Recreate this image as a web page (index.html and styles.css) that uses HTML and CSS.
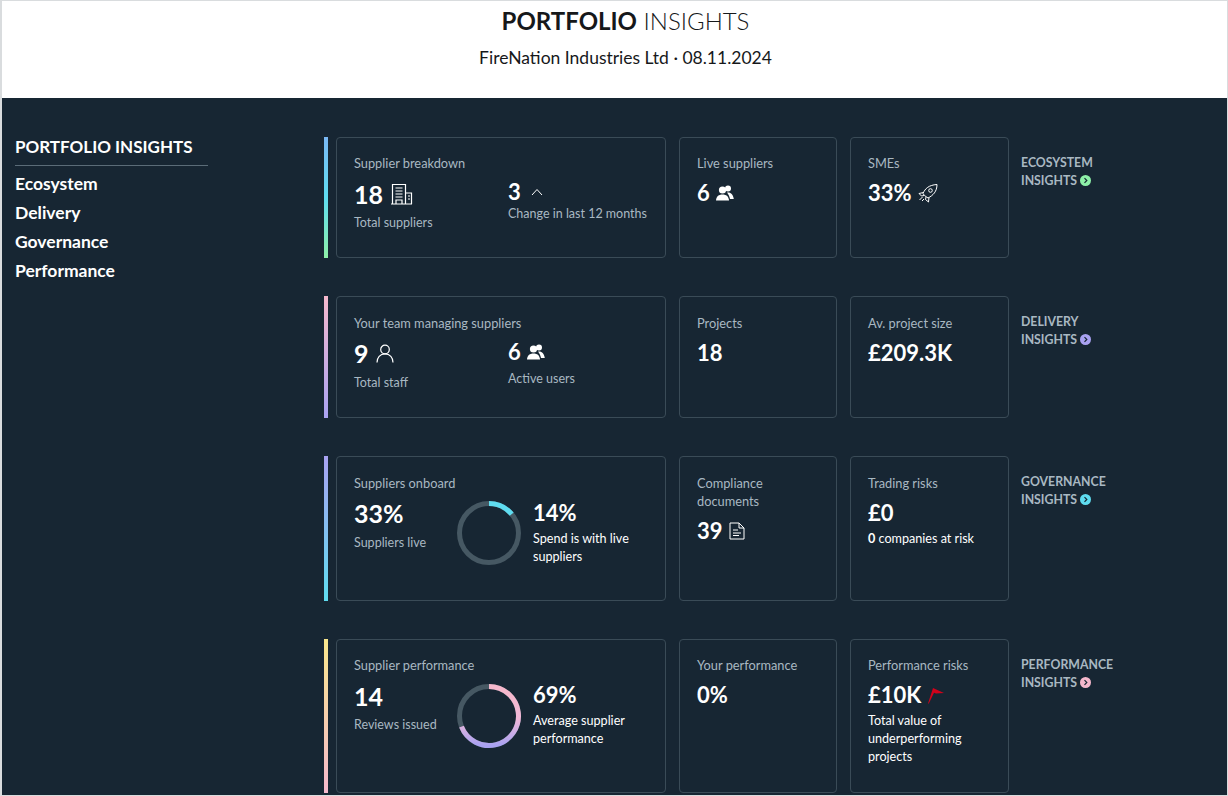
FILE: index.html
```html
<!DOCTYPE html>
<html lang="en">
<head>
    <meta charset="UTF-8">
    <meta name="viewport" content="width=device-width, initial-scale=1.0">
    <title>Portfolio Insights</title>
    <link rel="stylesheet" href="styles.css">
</head>
<body>
    <header class="top">
        <h1><strong>PORTFOLIO</strong> INSIGHTS</h1>
        <p>FireNation Industries Ltd · 08.11.2024</p>
    </header>

    <main class="main">
        <nav class="side">
            <h2>PORTFOLIO INSIGHTS</h2>
            <a href="#">Ecosystem</a>
            <a href="#">Delivery</a>
            <a href="#">Governance</a>
            <a href="#">Performance</a>
        </nav>

        <div class="rows">
            <!-- Ecosystem -->
            <section class="row row-eco">
                <div class="bar"></div>
                <div class="card card-wide">
                    <div class="label">Supplier breakdown</div>
                    <div class="split">
                        <div class="col-left">
                            <div class="big">18
                                <svg class="ico" width="24" height="22" viewBox="0 0 24 22" fill="none" stroke="#fff" stroke-width="1.2"><path d="M2.500 21V1.500h13V21M1 21h21M6 21v-4h6v4M5.500 5h7M5.500 8h7M5.500 11h7M5.500 14h7M15.500 10h6v11M18 13h2M18 16h2"/></svg>
                            </div>
                            <div class="sub">Total suppliers</div>
                        </div>
                        <div class="col-right">
                            <div class="mid">3
                                <svg class="ico ico-chev" width="12" height="8" viewBox="0 0 12 8" fill="none" stroke="#fff" stroke-width="1"><path d="M1 7l5-5.500L11 7"/></svg>
                            </div>
                            <div class="sub">Change in last 12 months</div>
                        </div>
                    </div>
                </div>
                <div class="card">
                    <div class="label">Live suppliers</div>
                    <div class="mid">6
                        <svg class="ico" width="18" height="16" viewBox="0 0 18 16" fill="#fff"><circle cx="6.500" cy="5" r="3.600"/><path d="M0 15.500c.3-4 2.600-6 6.500-6s6.200 2 6.500 6z"/><circle cx="12" cy="3.500" r="3"/><path d="M11 7.500c3.500-.7 6.300 2 6.800 6.500h-3.800c-.5-2.500-1.500-4.500-3-6.500z"/></svg>
                    </div>
                </div>
                <div class="card card-last">
                    <div class="label">SMEs</div>
                    <div class="mid">33%
                        <svg class="ico" width="20" height="19" viewBox="0 0 20 19" fill="none" stroke="#fff" stroke-width="1"><path d="M6.500 11.500L5 9.500c2-5 6-8.500 14-9 0 7-4 11-9 13.500z"/><circle cx="12.500" cy="6.500" r="1.800"/><path d="M5.500 8.500L1 9.500l2.500 2.500 2.500-.5M11 13.500l-.5 4.500-3-2.500.5-2.500M4.500 13l-3 3M6 15l-2 2"/></svg>
                    </div>
                </div>
                <a class="more" href="#">ECOSYSTEM<br>INSIGHTS
                    <svg class="go" width="11" height="11" viewBox="0 0 11 11"><circle cx="5.500" cy="5.500" r="5.500" fill="#8ef0a8"/><path d="M4.500 3.200l2.300 2.300-2.300 2.300" fill="none" stroke="#172633" stroke-width="1.200"/></svg>
                </a>
            </section>

            <!-- Delivery -->
            <section class="row row-del">
                <div class="bar"></div>
                <div class="card card-wide">
                    <div class="label">Your team managing suppliers</div>
                    <div class="split">
                        <div class="col-left">
                            <div class="big">9
                                <svg class="ico" width="18" height="19" viewBox="0 0 18 19" fill="none" stroke="#fff" stroke-width="1.200"><circle cx="9" cy="5.500" r="4.300"/><path d="M1 18.500c0-5 3-8.700 8-8.700s8 3.700 8 8.700"/></svg>
                            </div>
                            <div class="sub">Total staff</div>
                        </div>
                        <div class="col-right">
                            <div class="mid">6
                                <svg class="ico" width="18" height="16" viewBox="0 0 18 16" fill="#fff"><circle cx="6.500" cy="5" r="3.600"/><path d="M0 15.500c.3-4 2.600-6 6.500-6s6.200 2 6.500 6z"/><circle cx="12" cy="3.500" r="3"/><path d="M11 7.500c3.500-.7 6.300 2 6.800 6.500h-3.800c-.5-2.500-1.500-4.500-3-6.500z"/></svg>
                            </div>
                            <div class="sub sub-gap">Active users</div>
                        </div>
                    </div>
                </div>
                <div class="card">
                    <div class="label">Projects</div>
                    <div class="mid">18</div>
                </div>
                <div class="card card-last">
                    <div class="label">Av. project size</div>
                    <div class="mid">£209.3K</div>
                </div>
                <a class="more" href="#">DELIVERY<br>INSIGHTS
                    <svg class="go" width="11" height="11" viewBox="0 0 11 11"><circle cx="5.500" cy="5.500" r="5.500" fill="#a9a2f2"/><path d="M4.500 3.200l2.300 2.300-2.300 2.300" fill="none" stroke="#172633" stroke-width="1.200"/></svg>
                </a>
            </section>

            <!-- Governance -->
            <section class="row row-gov">
                <div class="bar"></div>
                <div class="card card-wide">
                    <div class="label">Suppliers onboard</div>
                    <div class="split split-donut">
                        <div class="col-stat">
                            <div class="big">33%</div>
                            <div class="sub">Suppliers live</div>
                        </div>
                        <svg class="donut" width="66" height="66" viewBox="0 0 66 66" fill="none" stroke-width="5">
                            <circle cx="33" cy="33" r="29.500" stroke="#465863"/>
                            <circle cx="33" cy="33" r="29.500" stroke="#5fdcf0" pathLength="100" stroke-dasharray="14 86" transform="rotate(-90 33 33)"/>
                        </svg>
                        <div class="col-note">
                            <div class="mid">14%</div>
                            <div class="note">Spend is with live suppliers</div>
                        </div>
                    </div>
                </div>
                <div class="card">
                    <div class="label">Compliance documents</div>
                    <div class="mid">39
                        <svg class="ico" width="16" height="18" viewBox="0 0 16 18" fill="none" stroke="#fff" stroke-width="1"><path d="M1 1h9l5 5v11H1zM10 1v5h5M4 8h5M4 11h8M4 13.500h6"/></svg>
                    </div>
                </div>
                <div class="card card-last">
                    <div class="label">Trading risks</div>
                    <div class="mid">£0</div>
                    <div class="note"><b>0</b> companies at risk</div>
                </div>
                <a class="more" href="#">GOVERNANCE<br>INSIGHTS
                    <svg class="go" width="11" height="11" viewBox="0 0 11 11"><circle cx="5.500" cy="5.500" r="5.500" fill="#5fdcf0"/><path d="M4.500 3.200l2.300 2.300-2.300 2.300" fill="none" stroke="#172633" stroke-width="1.200"/></svg>
                </a>
            </section>

            <!-- Performance -->
            <section class="row row-perf">
                <div class="bar"></div>
                <div class="card card-wide">
                    <div class="label">Supplier performance</div>
                    <div class="split split-donut">
                        <div class="col-stat">
                            <div class="big">14</div>
                            <div class="sub">Reviews issued</div>
                        </div>
                        <svg class="donut" width="66" height="66" viewBox="0 0 66 66" fill="none" stroke-width="5">
                            <defs>
                                <linearGradient id="perfArc" x1="0" y1="0" x2="0" y2="1">
                                    <stop offset="0.1" stop-color="#f5b8cc"/>
                                    <stop offset="0.55" stop-color="#f0b8d8"/>
                                    <stop offset="1" stop-color="#a9a2f2"/>
                                </linearGradient>
                            </defs>
                            <circle cx="33" cy="33" r="29.500" stroke="#465863"/>
                            <path d="M33 3.500A29.500 29.500 0 1 1 5.500 43.700" stroke="url(#perfArc)"/>
                        </svg>
                        <div class="col-note">
                            <div class="mid">69%</div>
                            <div class="note">Average supplier performance</div>
                        </div>
                    </div>
                </div>
                <div class="card">
                    <div class="label">Your performance</div>
                    <div class="mid">0%</div>
                </div>
                <div class="card card-last">
                    <div class="label">Performance risks</div>
                    <div class="mid">£10K
                        <svg class="ico" width="18" height="17" viewBox="0 0 18 17" fill="#d0021b"><path d="M1 16.500L6 1l11 5-8 .6-2-.8L1.800 16.500z"/></svg>
                    </div>
                    <div class="note">Total value of underperforming projects</div>
                </div>
                <a class="more" href="#">PERFORMANCE<br>INSIGHTS
                    <svg class="go" width="11" height="11" viewBox="0 0 11 11"><circle cx="5.500" cy="5.500" r="5.500" fill="#f5b8cc"/><path d="M4.500 3.200l2.300 2.300-2.300 2.300" fill="none" stroke="#172633" stroke-width="1.200"/></svg>
                </a>
            </section>
        </div>
    </main>
</body>
</html>
```

FILE: styles.css
```css
html, body {
    height: 796px;
    overflow: hidden;
}
body {
    font-family: Lato, "Open Sans", sans-serif;
    background: #d9dcde;
    margin: 0;
    padding: 1px 1px 1px 2px;
    box-sizing: border-box;
    display: flex;
    flex-direction: column;
    color: #fff;
}
.top {
    height: 97px;
    flex-shrink: 0;
    background: #fff;
    color: #16181a;
    text-align: center;
    padding: 6px 0 0 22px;
    box-sizing: border-box;
}
.top h1 {
    margin: 0;
    font-size: 24px;
    line-height: 28px;
    font-weight: 300;
}
.top h1 strong {
    font-weight: 700;
}
.top p {
    margin: 11px 0 0;
    font-size: 17.5px;
    line-height: 24px;
}
.main {
    flex: 1;
    min-height: 0;
    background: #172633;
    display: flex;
    padding: 39px 0 0 13px;
    overflow: hidden;
}
.side {
    width: 193px;
    margin-right: 116px;
    flex-shrink: 0;
}
.side h2 {
    margin: 0 0 3px;
    padding-bottom: 8px;
    font-size: 17px;
    line-height: 20px;
    font-weight: 700;
    border-bottom: 1px solid #5b6c78;
}
.side a {
    display: block;
    color: #fff;
    text-decoration: none;
    font-size: 17.5px;
    line-height: 29px;
    font-weight: 700;
}
.rows {
    display: flex;
    flex-direction: column;
    gap: 38px;
}
.row {
    display: flex;
    gap: 13px;
    height: 122px;
}
.row-eco {
    height: 121px;
}
.row-gov {
    height: 145px;
}
.row-perf {
    height: 154px;
}
.bar {
    width: 4px;
    margin-right: -5px;
}
.row-eco .bar {
    background: linear-gradient(#7ab8f5, #5fdcf0 50%, #8ef0a8);
}
.row-del .bar {
    background: linear-gradient(#f5b8cc, #a9a2f2);
}
.row-gov .bar {
    background: linear-gradient(#a9a2f2, #5fdcf0);
}
.row-perf .bar {
    background: linear-gradient(#f8e68c, #f5b8cc);
}
.card {
    width: 158px;
    box-sizing: border-box;
    padding: 16px 17px;
    border: 1px solid #3a4b57;
    border-radius: 4px;
}
.row-del .card, .row-gov .card {
    padding-top: 17px;
}
.card-wide {
    width: 330px;
}
.card-last {
    width: 159px;
}
.label {
    font-size: 12.8px;
    line-height: 18px;
    color: #a9b8c2;
}
.split {
    display: flex;
}
.col-left {
    width: 154px;
}
.big {
    font-size: 25px;
    line-height: 30px;
    font-weight: 700;
    margin-top: 6px;
    display: flex;
    align-items: center;
    gap: 7px;
}
.row-eco .big, .row-perf .big {
    margin-top: 7px;
    margin-bottom: -1px;
}
.mid {
    font-size: 22px;
    line-height: 28px;
    font-weight: 700;
    margin-top: 7px;
    display: flex;
    align-items: center;
    gap: 6px;
}
.col-right .mid {
    margin-top: 6px;
}
.sub {
    font-size: 12.5px;
    line-height: 18px;
    color: #a9b8c2;
    margin-top: 6px;
}
.col-right .sub {
    margin-top: -1px;
    white-space: nowrap;
}
.col-right .sub-gap {
    margin-top: 4px;
}
.ico {
    flex-shrink: 0;
}
.ico-chev {
    margin-left: 4px;
}
.split-donut {
    align-items: flex-start;
}
.col-stat {
    width: 102px;
    flex-shrink: 0;
}
.donut {
    flex-shrink: 0;
    margin-top: 9px;
}
.row-gov .donut {
    margin-top: 8px;
}
.col-note {
    margin-left: 11px;
    width: 118px;
}
.note {
    font-size: 12.6px;
    line-height: 18px;
    margin-top: 3px;
    color: #fff;
}
.more {
    margin-left: -1px;
    padding-top: 17px;
    font-size: 12.3px;
    line-height: 18px;
    font-weight: 700;
    color: #a9b8c2;
    text-decoration: none;
}
.go {
    vertical-align: -1px;
}
```
